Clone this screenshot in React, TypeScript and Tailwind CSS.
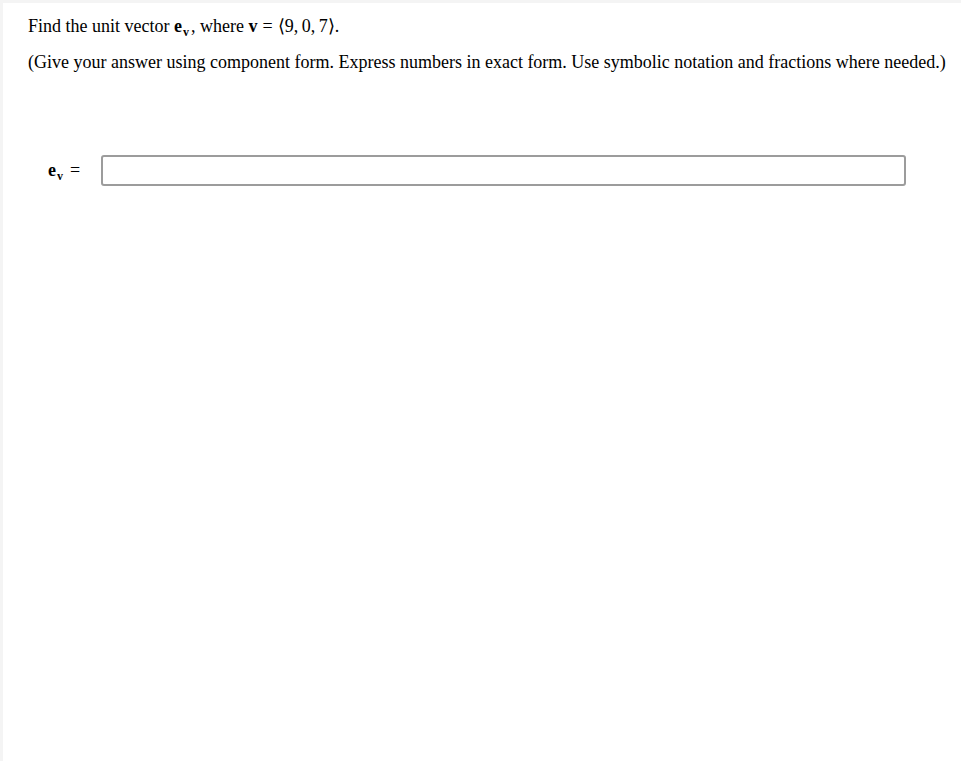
import React from 'react';

const serif = "font-['Liberation_Serif','Times_New_Roman',serif]";

const Ev: React.FC = () => (
  <span className="whitespace-nowrap">
    <b>e</b>
    <b className="relative top-[4px] ml-[1px] text-[12px]">v</b>
  </span>
);

const App: React.FC = () => {
  return (
    <div className={`min-h-[761px] bg-[#f4f4f4] pl-[3px] pt-[3px] ${serif} text-black`}>
      <div className="min-h-[758px] bg-white pl-[25px] pt-[13px]">
        <p className="text-[18px] leading-[20px]">
          Find the unit vector <Ev />
          <span className="ml-[2px]">,</span> where <b>v</b>
          <span className="mx-[5px]">=</span>
          <span>⟨9,&#8201;0,&#8201;7⟩</span>.
        </p>
        <p className="mt-[14px] whitespace-nowrap text-[18px] leading-[20px]">
          (Give your answer using component form. Express numbers in exact form. Use symbolic notation and fractions where needed.)
        </p>
        <div className="mt-[83px] flex items-center">
          <div className="w-[73px] pl-[20px] text-[18px] leading-[20px]">
            <Ev />
            <span className="ml-[7px]">=</span>
          </div>
          <div className="h-[31px] w-[805px] rounded-[3px] border-2 border-[#9c9c9c] bg-white" />
        </div>
      </div>
    </div>
  );
};

export default App;
